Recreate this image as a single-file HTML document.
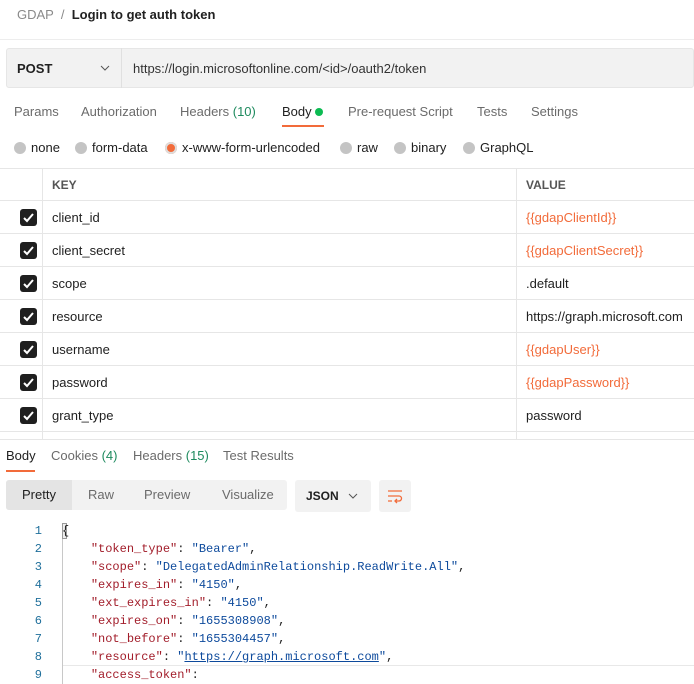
<!DOCTYPE html>
<html><head><meta charset="utf-8"><style>
*{margin:0;padding:0;box-sizing:border-box}
body{width:694px;height:684px;overflow:hidden;background:#fff;font-family:"Liberation Sans",sans-serif;font-size:13px;color:#212121;position:relative}
.a{position:absolute;white-space:nowrap}
.g{color:#6b6b6b}
.rad{position:absolute;width:12px;height:12px;border-radius:50%;background:#c4c4c4;top:142px}
.row{position:absolute;left:0;width:694px;height:33px;border-bottom:1px solid #e6e6e6}
.cb{position:absolute;left:20px;top:8px;width:17px;height:17px;border-radius:3px;background:#1f1f1f}
.cb svg{position:absolute;left:2px;top:2px}
.k{position:absolute;left:52px;top:9px}
.v{position:absolute;left:526px;top:9px}
.o{color:#f26b3a}
.code{position:absolute;font-family:"Liberation Mono",monospace;font-size:12px;white-space:pre;line-height:18px}
.ln{color:#1f6f9b;text-align:right;width:42px;left:0}
.s{color:#0d4a9c}.kk{color:#a21d2a}
</style></head><body>
<div class="a" style="left:17px;top:7px;font-size:13px"><span style="color:#8a8a8a">GDAP</span> <span style="color:#8a8a8a">&nbsp;/&nbsp;</span> <span style="color:#212121;font-weight:bold">Login to get auth token</span></div>
<div class="a" style="left:0;top:39px;width:694px;height:1px;background:#ededed"></div>
<div class="a" style="left:6px;top:48px;width:688px;height:40px;background:#f2f2f2;border:1px solid #e6e6e6;border-radius:3px"></div>
<div class="a" style="left:121px;top:48px;width:1px;height:40px;background:#e0e0e0"></div>
<div class="a" style="left:17px;top:61px;font-weight:bold">POST</div>
<svg class="a" style="left:100px;top:65px" width="10" height="6"><path d="M1 1l4 4 4-4" stroke="#555" fill="none"/></svg>
<div class="a" style="left:133px;top:61px;color:#333">https://login.microsoftonline.com/&lt;id&gt;/oauth2/token</div>

<div class="a g" style="left:14px;top:104px">Params</div>
<div class="a g" style="left:81px;top:104px">Authorization</div>
<div class="a g" style="left:180px;top:104px">Headers <span style="color:#1e8a5e">(10)</span></div>
<div class="a" style="left:282px;top:104px">Body</div>
<div class="a" style="left:315px;top:108px;width:8px;height:8px;border-radius:50%;background:#0cbb52"></div>
<div class="a" style="left:282px;top:125px;width:42px;height:2px;background:#f26b3a"></div>
<div class="a g" style="left:348px;top:104px">Pre-request Script</div>
<div class="a g" style="left:477px;top:104px">Tests</div>
<div class="a g" style="left:531px;top:104px">Settings</div>

<div class="rad" style="left:14px"></div><div class="a" style="left:31px;top:140px">none</div>
<div class="rad" style="left:75px"></div><div class="a" style="left:92px;top:140px">form-data</div>
<div class="rad" style="left:165px;background:#f26b3a;box-shadow:0 0 0 2px #ddd inset"></div><div class="a" style="left:182px;top:140px">x-www-form-urlencoded</div>
<div class="rad" style="left:340px"></div><div class="a" style="left:357px;top:140px">raw</div>
<div class="rad" style="left:394px"></div><div class="a" style="left:411px;top:140px">binary</div>
<div class="rad" style="left:463px"></div><div class="a" style="left:480px;top:140px">GraphQL</div>

<div class="a" style="left:0;top:168px;width:694px;height:1px;background:#e6e6e6"></div>
<div class="row" style="top:168px"><div class="k" style="font-weight:bold;color:#555;font-size:12px;top:10px">KEY</div><div class="v" style="font-weight:bold;color:#555;font-size:12px;top:10px">VALUE</div></div>
<div class="row" style="top:201px"><div class="cb"><svg width="13" height="13"><path d="M2 7l3 3 6-7" stroke="#fff" stroke-width="2" fill="none"/></svg></div><div class="k">client_id</div><div class="v o">{{gdapClientId}}</div></div>
<div class="row" style="top:234px"><div class="cb"><svg width="13" height="13"><path d="M2 7l3 3 6-7" stroke="#fff" stroke-width="2" fill="none"/></svg></div><div class="k">client_secret</div><div class="v o">{{gdapClientSecret}}</div></div>
<div class="row" style="top:267px"><div class="cb"><svg width="13" height="13"><path d="M2 7l3 3 6-7" stroke="#fff" stroke-width="2" fill="none"/></svg></div><div class="k">scope</div><div class="v">.default</div></div>
<div class="row" style="top:300px"><div class="cb"><svg width="13" height="13"><path d="M2 7l3 3 6-7" stroke="#fff" stroke-width="2" fill="none"/></svg></div><div class="k">resource</div><div class="v">https://graph.microsoft.com</div></div>
<div class="row" style="top:333px"><div class="cb"><svg width="13" height="13"><path d="M2 7l3 3 6-7" stroke="#fff" stroke-width="2" fill="none"/></svg></div><div class="k">username</div><div class="v o">{{gdapUser}}</div></div>
<div class="row" style="top:366px"><div class="cb"><svg width="13" height="13"><path d="M2 7l3 3 6-7" stroke="#fff" stroke-width="2" fill="none"/></svg></div><div class="k">password</div><div class="v o">{{gdapPassword}}</div></div>
<div class="row" style="top:399px"><div class="cb"><svg width="13" height="13"><path d="M2 7l3 3 6-7" stroke="#fff" stroke-width="2" fill="none"/></svg></div><div class="k">grant_type</div><div class="v">password</div></div>
<div class="a" style="left:42px;top:168px;width:1px;height:272px;background:#e6e6e6"></div>
<div class="a" style="left:516px;top:168px;width:1px;height:272px;background:#e6e6e6"></div>
<div class="a" style="left:0;top:439px;width:694px;height:1px;background:#e6e6e6"></div>

<div class="a" style="left:6px;top:448px">Body</div>
<div class="a" style="left:6px;top:470px;width:29px;height:2px;background:#f26b3a"></div>
<div class="a g" style="left:51px;top:448px">Cookies <span style="color:#1e8a5e">(4)</span></div>
<div class="a g" style="left:133px;top:448px">Headers <span style="color:#1e8a5e">(15)</span></div>
<div class="a g" style="left:223px;top:448px">Test Results</div>

<div class="a" style="left:6px;top:480px;width:281px;height:30px;background:#f2f2f2;border-radius:3px"></div>
<div class="a" style="left:6px;top:480px;width:66px;height:30px;background:#e4e4e4;border-radius:3px 0 0 3px"></div>
<div class="a" style="left:22px;top:487px">Pretty</div>
<div class="a g" style="left:88px;top:487px">Raw</div>
<div class="a g" style="left:144px;top:487px">Preview</div>
<div class="a g" style="left:222px;top:487px">Visualize</div>
<div class="a" style="left:295px;top:480px;width:76px;height:32px;background:#f2f2f2;border-radius:3px"></div>
<div class="a" style="left:306px;top:489px;font-size:12px;font-weight:bold">JSON</div>
<svg class="a" style="left:348px;top:493px" width="10" height="6"><path d="M1 1l4 4 4-4" stroke="#555" fill="none"/></svg>
<div class="a" style="left:379px;top:480px;width:32px;height:32px;background:#f2f2f2;border-radius:3px"></div>
<svg class="a" style="left:387px;top:488px" width="16" height="16"><path d="M1 3h14M1 8h11a2.5 2.5 0 010 5h-3M10 11l-2 2 2 2M1 13h4" stroke="#f26b3a" stroke-width="1.3" fill="none"/></svg>

<div class="a" style="left:62px;top:523px;width:1px;height:161px;background:#c8c8c8"></div>
<div class="a" style="left:63px;top:665px;width:631px;height:1px;background:#e8e8e8"></div>
<div class="a" style="left:62px;top:523px;width:5px;height:16px;border:1px solid #999;background:#eee"></div>
<div class="code ln" style="top:522px">1
2
3
4
5
6
7
8
9</div>
<div class="code" style="left:62px;top:522px">{
    <span class="kk">"token_type"</span>: <span class="s">"Bearer"</span>,
    <span class="kk">"scope"</span>: <span class="s">"DelegatedAdminRelationship.ReadWrite.All"</span>,
    <span class="kk">"expires_in"</span>: <span class="s">"4150"</span>,
    <span class="kk">"ext_expires_in"</span>: <span class="s">"4150"</span>,
    <span class="kk">"expires_on"</span>: <span class="s">"1655308908"</span>,
    <span class="kk">"not_before"</span>: <span class="s">"1655304457"</span>,
    <span class="kk">"resource"</span>: <span class="s">"<u>https://graph.microsoft.com</u>"</span>,
    <span class="kk">"access_token"</span>:</div>
</body></html>
